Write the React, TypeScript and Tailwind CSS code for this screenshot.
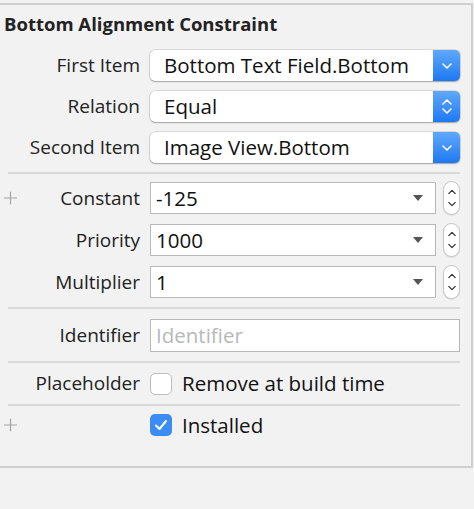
import React from "react";

const font = { fontFamily: '"Open Sans", "Liberation Sans", Arial, sans-serif' };

function Chevron({ up }: { up?: boolean }) {
  return (
    <svg width="10" height="6" viewBox="0 0 10 6" className="block">
      <path
        d={up ? "M1 5 L5 1 L9 5" : "M1 1 L5 5 L9 1"}
        fill="none"
        stroke="currentColor"
        strokeWidth="1.6"
        strokeLinecap="round"
        strokeLinejoin="round"
      />
    </svg>
  );
}

function Plus() {
  return (
    <svg width="13" height="13" viewBox="0 0 13 13" className="block">
      <path d="M6.5 0 V13 M0 6.5 H13" stroke="#a3a3a3" strokeWidth="1.2" />
    </svg>
  );
}

function Label({ children }: { children?: React.ReactNode }) {
  return (
    <div className="w-[150px] shrink-0 pr-[10px] text-right text-[19px] text-[#222]">
      {children}
    </div>
  );
}

function Row({
  label,
  plus,
  children,
  className = "",
}: {
  label?: string;
  plus?: boolean;
  children: React.ReactNode;
  className?: string;
}) {
  return (
    <div className={`relative flex items-center ${className}`}>
      {plus && (
        <div className="absolute left-[4px] top-1/2 -translate-y-1/2">
          <Plus />
        </div>
      )}
      <Label>{label}</Label>
      {children}
    </div>
  );
}

function Popup({ value, double }: { value: string; double?: boolean }) {
  return (
    <div className="flex h-[31px] w-[310px] overflow-hidden rounded-[5px] bg-white shadow-[0_0_0_0.5px_rgba(0,0,0,0.2),0_1px_1.5px_rgba(0,0,0,0.25)]">
      <div className="flex-1 pl-[14px] text-[20.5px] leading-[31px] text-[#111]">
        {value}
      </div>
      <div className="flex w-[27px] flex-col items-center justify-center gap-[3px] bg-gradient-to-b from-[#5fa8fb] to-[#1c78f2] text-white">
        {double && <Chevron up />}
        <Chevron />
      </div>
    </div>
  );
}

function Stepper() {
  return (
    <div className="ml-[7px] flex h-[34px] w-[17px] flex-col items-center justify-center gap-[6px] rounded-full border border-[#c4c4c4] bg-white text-[#333] shadow-[0_1px_1px_rgba(0,0,0,0.08)]">
      <div className="scale-[0.8]">
        <Chevron up />
      </div>
      <div className="scale-[0.8]">
        <Chevron />
      </div>
    </div>
  );
}

function Combo({ value }: { value: string }) {
  return (
    <div className="flex items-center">
      <div className="flex h-[32px] w-[286px] items-center border border-[#b9b9b9] bg-white pl-[5px] pr-[12px]">
        <div className="flex-1 text-[20.5px] text-[#111]">{value}</div>
        <svg width="10" height="6" viewBox="0 0 10 6" className="block">
          <path d="M0 0 H10 L5 6 Z" fill="#555" />
        </svg>
      </div>
      <Stepper />
    </div>
  );
}

function Divider() {
  return <div className="ml-[8px] h-[2px] w-[452px] bg-[#d9d9d9]" />;
}

function Checkbox({ checked }: { checked?: boolean }) {
  return checked ? (
    <div className="flex h-[22px] w-[22px] items-center justify-center rounded-[5px] bg-[#3b8df5]">
      <svg width="14" height="12" viewBox="0 0 14 12">
        <path
          d="M2 6.5 L5.5 10 L12 2"
          fill="none"
          stroke="white"
          strokeWidth="2"
          strokeLinecap="round"
          strokeLinejoin="round"
        />
      </svg>
    </div>
  ) : (
    <div className="h-[22px] w-[22px] rounded-[5px] border border-[#bdbdbd] bg-white" />
  );
}

export default function App() {
  return (
    <div className="h-[509px] w-[474px] overflow-hidden bg-[#f2f2f2]" style={font}>
      <div className="mt-[3px] h-[465px] w-[473px] border-y-2 border-r-2 border-[#cfcfcf]">
        <div className="pl-[4px] pt-[7px] text-[18.5px] font-bold leading-[24px] text-[#222]">
          Bottom Alignment Constraint
        </div>

        <div className="mt-[14px] flex flex-col gap-[10px]">
          <Row label="First Item">
            <Popup value="Bottom Text Field.Bottom" />
          </Row>
          <Row label="Relation">
            <Popup value="Equal" double />
          </Row>
          <Row label="Second Item">
            <Popup value="Image View.Bottom" />
          </Row>
        </div>

        <div className="mt-[9px]">
          <Divider />
        </div>

        <div className="mt-[7px] flex flex-col gap-[8px]">
          <Row label="Constant" plus>
            <Combo value="-125" />
          </Row>
          <Row label="Priority">
            <Combo value="1000" />
          </Row>
          <Row label="Multiplier">
            <Combo value="1" />
          </Row>
        </div>

        <div className="mt-[8px]">
          <Divider />
        </div>

        <Row className="mt-[10px]" label="Identifier">
          <div className="h-[33px] w-[310px] border border-[#b9b9b9] bg-white pl-[5px] text-[20.5px] leading-[31px] text-[#b8b8b8]">
            Identifier
          </div>
        </Row>

        <div className="mt-[9px]">
          <Divider />
        </div>

        <Row className="h-[41px]" label="Placeholder">
          <Checkbox />
          <span className="ml-[10px] text-[20.5px] text-[#111]">
            Remove at build time
          </span>
        </Row>

        <Divider />

        <Row className="h-[38px]" plus>
          <Checkbox checked />
          <span className="ml-[10px] text-[20.5px] text-[#111]">Installed</span>
        </Row>
      </div>
    </div>
  );
}
